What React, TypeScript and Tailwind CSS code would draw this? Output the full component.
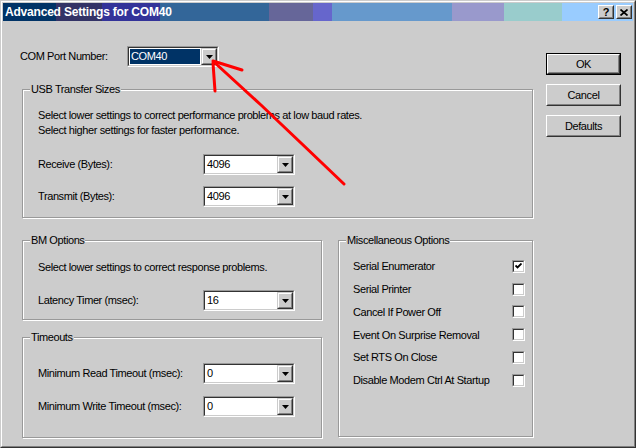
import React from "react";

function DropButton() {
  return (
    <div className="h-full w-[16px] border border-t-[#cccccc] border-l-[#cccccc] border-b-[#333333] border-r-[#333333]">
      <div className="flex h-full w-full items-center justify-center border border-t-white border-l-white border-b-[#808080] border-r-[#808080] bg-[#cccccc]">
        <svg width="7" height="4" viewBox="0 0 7 4">
          <path d="M0 0H7L3.5 4Z" fill="#000" />
        </svg>
      </div>
    </div>
  );
}

function Combo({ value, selected }: { value: string; selected?: boolean }) {
  return (
    <div className="h-[21px] w-[92px] shrink-0 border border-t-[#999999] border-l-[#999999] border-b-white border-r-white">
      <div className="flex h-full w-full border border-t-[#333333] border-l-[#333333] border-b-[#cccccc] border-r-[#cccccc] bg-white">
        {selected ? (
          <div className="flex flex-1 p-[1px]">
            <div className="flex flex-1 items-center bg-[#003366] pl-[1px] text-white">{value}</div>
          </div>
        ) : (
          <div className="flex flex-1 items-center pl-[2px] text-black">{value}</div>
        )}
        <DropButton />
      </div>
    </div>
  );
}

function Group({
  title,
  className,
  children,
}: {
  title: string;
  className: string;
  children?: React.ReactNode;
}) {
  return (
    <div
      className={
        "relative shrink-0 border border-[#999999] shadow-[1px_1px_0_#ffffff,inset_1px_1px_0_#ffffff] " +
        className
      }
    >
      <span className="absolute left-[7px] top-[-8px] bg-[#cccccc] px-[1px] leading-[15px]">{title}</span>
      {children}
    </div>
  );
}

function Checkbox({ checked }: { checked?: boolean }) {
  return (
    <div className="h-[13px] w-[13px] shrink-0 border border-t-[#999999] border-l-[#999999] border-b-white border-r-white">
      <div className="flex h-full w-full items-center justify-center border border-t-[#333333] border-l-[#333333] border-b-[#cccccc] border-r-[#cccccc] bg-white">
        {checked && (
          <svg width="7" height="7" viewBox="0 0 7 7">
            <path d="M0.5 2.5L2.5 4.5L6.5 0.5" stroke="#000" strokeWidth="1.8" fill="none" />
          </svg>
        )}
      </div>
    </div>
  );
}

function Btn({ label, def }: { label: string; def?: boolean }) {
  const inner = (
    <div className="h-full w-full border border-t-white border-l-white border-b-[#333333] border-r-[#333333]">
      <div className="flex h-full w-full items-center justify-center border border-t-[#cccccc] border-l-[#cccccc] border-b-[#808080] border-r-[#808080] bg-[#cccccc]">
        {label}
      </div>
    </div>
  );
  return (
    <div className={"h-[22px] w-[75px] " + (def ? "border border-black" : "")}>{inner}</div>
  );
}

function TitleBtn({ children }: { children: React.ReactNode }) {
  return (
    <div className="h-[14px] w-[16px] border border-t-white border-l-white border-b-[#333333] border-r-[#333333]">
      <div className="flex h-full w-full items-center justify-center border border-t-[#cccccc] border-l-[#cccccc] border-b-[#808080] border-r-[#808080] bg-[#cccccc] text-[11px] font-bold leading-none text-black">
        {children}
      </div>
    </div>
  );
}

const miscItems: [string, boolean][] = [
  ["Serial Enumerator", true],
  ["Serial Printer", false],
  ["Cancel If Power Off", false],
  ["Event On Surprise Removal", false],
  ["Set RTS On Close", false],
  ["Disable Modem Ctrl At Startup", false],
];

export default function App() {
  return (
    <div className="relative h-[448px] w-[636px] overflow-hidden border border-t-[#cccccc] border-l-[#cccccc] border-b-[#333333] border-r-[#333333] bg-[#cccccc] font-['Liberation_Sans',Arial,sans-serif] text-[11px] tracking-[-0.4px] text-black">
      <div className="h-full w-full border border-t-white border-l-white border-b-[#808080] border-r-[#808080] p-[1px]">
        {/* Title bar */}
        <div className="flex h-[18px] items-center bg-[linear-gradient(90deg,#003366_53px,#333366_53px,#333366_99px,#333399_99px,#333399_157px,#336699_157px,#336699_266px,#666699_266px,#666699_310px,#6666cc_310px,#6666cc_329px,#6699cc_329px,#6699cc_449px,#9999cc_449px,#9999cc_501px,#99cccc_501px,#99cccc_559px,#99ccff_559px)] pl-[2px] pr-[1px]">
          <span className="flex-1 text-[12px] font-bold tracking-[-0.2px] text-white">
            Advanced Settings for COM40
          </span>
          <div className="flex gap-[2px]">
            <TitleBtn>?</TitleBtn>
            <TitleBtn>
              <svg width="8" height="7" viewBox="0 0 8 7">
                <path d="M0.5 0.5L7.5 6.5M7.5 0.5L0.5 6.5" stroke="#000" strokeWidth="1.7" />
              </svg>
            </TitleBtn>
          </div>
        </div>

        {/* Body */}
        <div className="flex pl-[19px]">
          {/* Left content */}
          <div className="flex w-[511px] flex-col">
            <div className="mt-[25px] flex h-[21px] items-center">
              <span className="ml-[-2px] w-[107px]">COM Port Number:</span>
              <Combo value="COM40" selected />
            </div>

            <Group title="USB Transfer Sizes" className="mt-[22px] h-[129px] w-[511px] pl-[15px] pt-[18px]">
              <div className="leading-[15px]">Select lower settings to correct performance problems at low baud rates.</div>
              <div className="leading-[15px]">Select higher settings for faster performance.</div>
              <div className="mt-[16px] flex h-[21px] items-center">
                <span className="w-[165px]">Receive (Bytes):</span>
                <Combo value="4096" />
              </div>
              <div className="mt-[11px] flex h-[21px] items-center">
                <span className="w-[165px]">Transmit (Bytes):</span>
                <Combo value="4096" />
              </div>
            </Group>

            <div className="mt-[22px] flex items-start">
              <div className="flex flex-col">
                <Group title="BM Options" className="h-[80px] w-[300px] pl-[15px] pt-[19px]">
                  <div className="leading-[15px]">Select lower settings to correct response problems.</div>
                  <div className="mt-[15px] flex h-[21px] items-center">
                    <span className="w-[165px]">Latency Timer (msec):</span>
                    <Combo value="16" />
                  </div>
                </Group>
                <Group title="Timeouts" className="mt-[17px] h-[101px] w-[300px] pl-[15px] pt-[25px]">
                  <div className="flex h-[21px] items-center">
                    <span className="w-[165px]">Minimum Read Timeout (msec):</span>
                    <Combo value="0" />
                  </div>
                  <div className="mt-[12px] flex h-[21px] items-center">
                    <span className="w-[165px]">Minimum Write Timeout (msec):</span>
                    <Combo value="0" />
                  </div>
                </Group>
              </div>
              <Group title="Miscellaneous Options" className="ml-[16px] h-[197px] w-[195px] pl-[14px] pr-[7px] pt-[14px]">
                {miscItems.map(([label, checked]) => (
                  <div key={label} className="flex h-[22.8px] items-center justify-between">
                    <span>{label}</span>
                    <Checkbox checked={checked} />
                  </div>
                ))}
              </Group>
            </div>
          </div>

          {/* Right buttons */}
          <div className="ml-[13px] mt-[32px] flex flex-col gap-[9px]">
            <Btn label="OK" def />
            <Btn label="Cancel" />
            <Btn label="Defaults" />
          </div>
        </div>
      </div>

      {/* Red annotation arrow */}
      <svg className="pointer-events-none absolute left-0 top-0" width="636" height="448" viewBox="0 0 636 448">
        <g stroke="#ff0000" strokeWidth="3" strokeLinecap="round" fill="none">
          <path d="M213 61L260 104L300 142L343 183" />
          <path d="M212 60L241 69" />
          <path d="M212 62L213 76L214 90" />
        </g>
      </svg>
    </div>
  );
}
